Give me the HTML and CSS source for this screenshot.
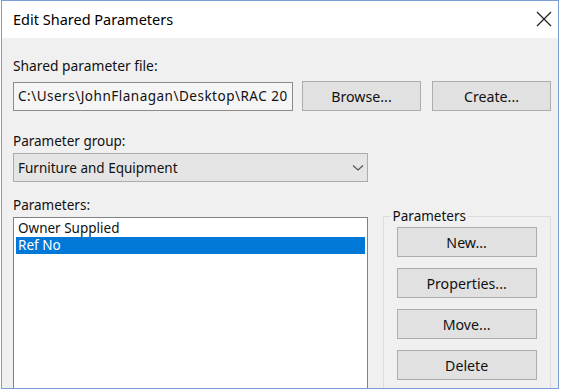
FILE: index.html
```html
<!DOCTYPE html>
<html lang="en">
<head>
    <meta charset="UTF-8">
    <title>Edit Shared Parameters</title>
    <link rel="stylesheet" href="styles.css">
</head>
<body>
  <div class="dialog">
    <div class="titlebar">
      <span class="title">Edit Shared Parameters</span>
      <svg class="close" viewBox="0 0 16 16" width="16" height="16">
        <path d="M1 1 L15 15 M15 1 L1 15" stroke="#222" stroke-width="1.3" fill="none"/>
      </svg>
    </div>

    <div class="content">
      <div class="label first">Shared parameter file:</div>
      <div class="file_row">
        <div class="textbox">C:\Users\JohnFlanagan\Desktop\RAC 20</div>
        <button class="btn">Browse...</button>
        <button class="btn">Create...</button>
      </div>

      <div class="label">Parameter group:</div>
      <div class="combo">
        <span>Furniture and Equipment</span>
        <svg class="chevron" viewBox="0 0 12 8" width="12" height="8">
          <path d="M1 1.5 L6 6 L11 1.5" stroke="#555" stroke-width="1.2" fill="none"/>
        </svg>
      </div>

      <div class="lower">
        <div class="left_col">
          <div class="label">Parameters:</div>
          <div class="listbox">
            <div class="item">Owner Supplied</div>
            <div class="item selected">Ref No</div>
          </div>
        </div>
        <fieldset class="groupbox">
          <legend>Parameters</legend>
          <button class="btn side">New...</button>
          <button class="btn side">Properties...</button>
          <button class="btn side">Move...</button>
          <button class="btn side">Delete</button>
        </fieldset>
      </div>
    </div>
  </div>
</body>
</html>
```

FILE: styles.css
```css
* {
    margin: 0;
    padding: 0;
    box-sizing: border-box;
}
body {
    background: white;
    font-family: "Noto Sans", "Open Sans", sans-serif;
    font-size: 13.5px;
    color: #111;
    overflow: hidden;
}
.dialog {
    margin-left: 1px;
    width: 558px;
    height: 389px;
    border: 1px solid #7b9bd4;
    background: #f0f0f0;
    overflow: hidden;
    display: flex;
    flex-direction: column;
}
.titlebar {
    height: 37px;
    flex-shrink: 0;
    background: white;
    display: flex;
    align-items: center;
    justify-content: space-between;
    padding: 0 6px 2px 11px;
}
.title {
    font-size: 14.5px;
    color: #000;
}
.content {
    padding: 0 7px 0 11px;
}
.label {
    height: 20px;
    line-height: 20px;
    margin-top: 20px;
}
.label.first {
    margin-top: 18px;
    font-size: 13.8px;
}
.file_row {
    display: flex;
    gap: 9px;
    margin-top: 5px;
    height: 30px;
}
.textbox {
    width: 280px;
    height: 29px;
    border: 1px solid #8c8c8c;
    background: #f5f5f5;
    padding: 0 0 0 4px;
    line-height: 27px;
    letter-spacing: 0.5px;
    white-space: nowrap;
    overflow: hidden;
    margin-top: 1px;
}
.btn {
    font-family: inherit;
    font-size: 14.2px;
    color: #111;
    background: #e1e1e1;
    border: 1px solid #adadad;
    width: 119px;
    height: 30px;
}
.file_row .btn + .btn {
    margin-left: 2px;
}
.combo {
    margin-top: 2px;
    width: 355px;
    height: 29px;
    border: 1px solid #acacac;
    background: #e5e5e5;
    display: flex;
    align-items: center;
    justify-content: space-between;
    padding: 0 3px 0 4px;
}
.lower {
    display: flex;
    gap: 15px;
}
.left_col {
    width: 356px;
}
.left_col .label {
    margin-top: 13px;
}
.listbox {
    margin-top: 2px;
    height: 200px;
    border: 1px solid #828282;
    background: white;
    padding: 2px 2px;
}
.item {
    height: 17px;
    line-height: 17px;
    padding-left: 2px;
}
.item.selected {
    background: #0078d7;
    color: white;
}
.groupbox {
    margin-top: 26px;
    width: 169px;
    height: 220px;
    border: 1px solid #dcdcdc;
    padding: 3px 0 0 13px;
    display: flex;
    flex-direction: column;
}
.groupbox legend {
    padding: 0 2px;
    margin-left: -6px;
    line-height: 16px;
}
.btn.side {
    width: 140px;
    height: 30px;
    margin-bottom: 11px;
}
```
